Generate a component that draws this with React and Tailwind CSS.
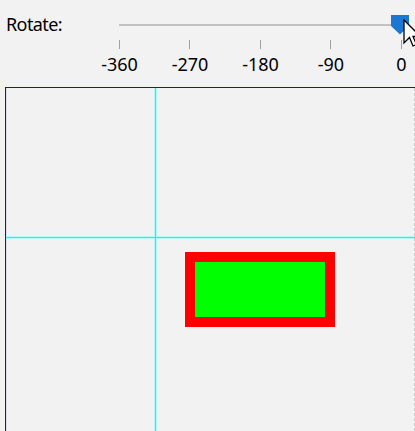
import React from "react";

const ticks = ["-360", "-270", "-180", "-90", "0"];

function Slider() {
  return (
    <div className="relative flex-1 pl-[57px] pr-[13px]">
      {/* track + thumb */}
      <div className="relative h-[40px]">
        <div className="absolute left-0 right-[-2px] top-[24px] h-[2px] bg-[#c2c2c2]" />
        <svg className="absolute right-[-7px] top-[15px]" width="18" height="20" viewBox="0 0 18 20">
          <polygon points="0,0 18,0 18,11 9,19.5 0,11" fill="#1a78d4" />
        </svg>
        <svg className="absolute right-[-21px] top-[19px]" width="20" height="30" viewBox="0 0 20 30">
          <path
            d="M1 1 L1 24 L6.5 18.5 L10 27 L13.5 25.5 L10 17.5 L17.5 17.5 Z"
            fill="#ffffff"
            stroke="#000000"
            strokeWidth="1.3"
          />
        </svg>
      </div>
      {/* ticks and labels */}
      <div className="flex justify-between">
        {ticks.map((t) => (
          <div key={t} className="flex w-px flex-col items-center">
            <div className="h-[9px] w-px bg-[#a0a0a0]" />
            <div className="mt-[4px] whitespace-nowrap text-[18px] leading-[22px]">{t}</div>
          </div>
        ))}
      </div>
    </div>
  );
}

export default function App() {
  return (
    <div
      className="flex h-[431px] w-[415px] flex-col overflow-hidden bg-[#f2f2f2] text-black"
      style={{ fontFamily: '"Noto Sans", "Open Sans", sans-serif' }}
    >
      <div className="flex h-[87px] shrink-0">
        <div className="pl-[6px] pt-[13px] text-[18px] leading-[22px] tracking-[-0.6px]">Rotate:</div>
        <Slider />
      </div>
      {/* canvas */}
      <div className="relative ml-[5px] flex-1 border-l border-t border-[#0a0af5]">
        <div className="absolute left-0 top-0 h-full w-px bg-[#dcdcea]" />
        {/* axes */}
        <div className="absolute left-[148px] top-0 h-full w-px bg-[#b0fafa]" />
        <div className="absolute left-[150px] top-0 h-full w-px bg-[#b0fafa]" />
        <div className="absolute left-0 top-[148px] h-px w-full bg-[#b0fafa]" />
        <div className="absolute left-0 top-[150px] h-px w-full bg-[#b0fafa]" />
        <div className="absolute left-[149px] top-0 h-full w-px bg-[#00ffff]" />
        <div className="absolute left-0 top-[149px] h-px w-full bg-[#00ffff]" />
        {/* rectangle */}
        <div className="absolute left-[179px] top-[164px] h-[75px] w-[150px] border-[10px] border-[#ff0000] bg-[#00ff00]" />
        {/* dashed right edge */}
        <div className="absolute right-0 top-0 h-full w-px border-r border-dashed border-[#c8c8c8]" />
      </div>
    </div>
  );
}
